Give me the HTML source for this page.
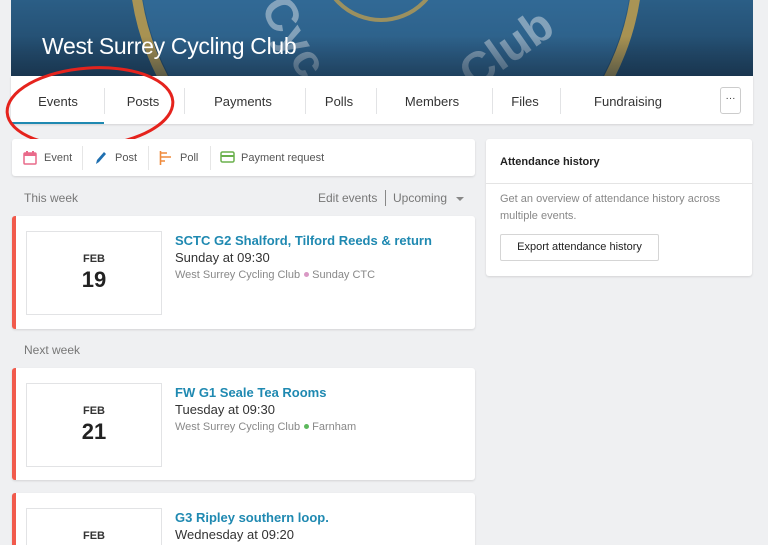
<!DOCTYPE html>
<html><head><meta charset="utf-8"><style>
*{box-sizing:border-box;margin:0;padding:0}
html,body{width:768px;height:545px;overflow:hidden}
body{background:#eff0f2;font-family:"Liberation Sans",Arial,sans-serif;position:relative}
.a{position:absolute}
.card{position:absolute;background:#fff;border-radius:3px;box-shadow:0 1px 2px rgba(0,0,0,.12)}
.tab{position:absolute;top:94px;font-size:13px;color:#333;transform:translateX(-50%)}
.sep{position:absolute;top:88px;width:1px;height:26px;background:#e2e3e5}
.ev{position:absolute;left:12px;width:463px;background:#fff;border-left:4px solid #f15a4c;border-radius:3px;box-shadow:0 1px 2px rgba(0,0,0,.12)}
.db{position:absolute;left:10px;top:15px;width:136px;height:84px;border:1px solid #e2e3e5;text-align:center}
.mon{font-size:11px;font-weight:bold;color:#333;margin-top:21px}
.day{font-size:22px;font-weight:bold;color:#222;margin-top:2px}
.tt{position:absolute;left:159px;top:17px;font-size:13px;font-weight:bold;color:#1f89b1}
.tm{position:absolute;left:159px;top:34px;font-size:13px;color:#333}
.mt{position:absolute;left:159px;top:53px;font-size:11px;color:#888}
.dot{display:inline-block;width:5px;height:5px;border-radius:50%;margin:0 3px 1px 4px;vertical-align:middle}
</style></head><body>
<div class="a" style="left:11px;top:0;width:742px;height:76px;overflow:hidden;background:linear-gradient(#2b5e86,#1f4463)">
<svg width="742" height="76" class="a" style="left:0;top:0">
<circle cx="375" cy="-40" r="252" fill="none" stroke="#c9a24a" stroke-width="10" opacity=".8"/>
<circle cx="375" cy="-40" r="246" fill="#3a78a8" opacity=".45"/>
<circle cx="370" cy="-40" r="60" fill="none" stroke="#c9a24a" stroke-width="4" opacity=".7"/>
<text x="440" y="60" font-family="Liberation Sans" font-size="46" font-weight="bold" fill="#c8d4de" opacity=".55" transform="rotate(-35 500 40)">Club</text>
<text x="230" y="20" font-family="Liberation Sans" font-size="46" font-weight="bold" fill="#c8d4de" opacity=".55" transform="rotate(60 250 30)">Cyc</text>
</svg>
<div class="a" style="left:0;bottom:0;width:100%;height:40px;background:linear-gradient(rgba(20,40,60,0),rgba(20,40,60,.5))"></div>
<div class="a" style="left:31px;top:33px;font-size:23px;color:#fff;letter-spacing:-.3px">West Surrey Cycling Club</div>
</div>
<div class="a" style="left:11px;top:76px;width:742px;height:48px;background:#fff;box-shadow:0 1px 2px rgba(0,0,0,.12)"></div>
<div class="tab" style="left:58px">Events</div><div class="tab" style="left:143px">Posts</div><div class="tab" style="left:243px">Payments</div><div class="tab" style="left:339px">Polls</div><div class="tab" style="left:432px">Members</div><div class="tab" style="left:525px">Files</div><div class="tab" style="left:628px">Fundraising</div>
<div class="sep" style="left:104px"></div><div class="sep" style="left:184px"></div><div class="sep" style="left:305px"></div><div class="sep" style="left:376px"></div><div class="sep" style="left:492px"></div><div class="sep" style="left:560px"></div>
<div class="a" style="left:11px;top:122px;width:93px;height:2px;background:#1f89b1"></div>
<div class="a" style="left:720px;top:87px;width:21px;height:27px;border:1px solid #ccc;border-radius:3px;font-size:10px;text-align:center;line-height:22px;color:#333">···</div>
<svg class="a" style="left:0;top:60px" width="190" height="110"><ellipse cx="90" cy="47" rx="83" ry="39" fill="none" stroke="#e5231d" stroke-width="3" transform="rotate(-4 90 47)"/></svg>

<div class="card" style="left:12px;top:139px;width:463px;height:37px"></div>
<svg class="a" style="left:23px;top:151px" width="14" height="14"><rect x="1" y="2" width="12" height="11" rx="1" fill="#fff" stroke="#e96a8a" stroke-width="1.5"/><rect x="1" y="2" width="12" height="3" fill="#e96a8a"/><rect x="3" y="0" width="2" height="3" fill="#e96a8a"/><rect x="9" y="0" width="2" height="3" fill="#e96a8a"/></svg>
<div class="a" style="left:44px;top:152px;font-size:11px;color:#555">Event</div>
<div class="a" style="left:82px;top:146px;width:1px;height:24px;background:#e6e6e6"></div>
<svg class="a" style="left:94px;top:151px" width="14" height="14"><path d="M2 13 L3 9 L10 1 L12 3 L5 11 Z" fill="#1f6fb0"/></svg>
<div class="a" style="left:115px;top:152px;font-size:11px;color:#555">Post</div>
<div class="a" style="left:148px;top:146px;width:1px;height:24px;background:#e6e6e6"></div>
<svg class="a" style="left:159px;top:151px" width="14" height="14"><path d="M1.5 0V14M1.5 2H8M1.5 6H12M1.5 10H6" stroke="#ef8a3c" stroke-width="1.6" fill="none"/></svg>
<div class="a" style="left:180px;top:152px;font-size:11px;color:#555">Poll</div>
<div class="a" style="left:210px;top:146px;width:1px;height:24px;background:#e6e6e6"></div>
<svg class="a" style="left:220px;top:151px" width="16" height="13"><rect x="1" y="1" width="13" height="10" rx="1.5" fill="none" stroke="#6ab04c" stroke-width="1.5"/><rect x="1" y="4" width="13" height="2" fill="#6ab04c"/></svg>
<div class="a" style="left:241px;top:152px;font-size:11px;color:#555">Payment request</div>

<div class="a" style="left:24px;top:191px;font-size:12px;color:#777">This week</div>
<div class="a" style="left:318px;top:191px;font-size:12px;color:#777">Edit events</div>
<div class="a" style="left:385px;top:190px;width:1px;height:16px;background:#888"></div>
<div class="a" style="left:393px;top:191px;font-size:12px;color:#777">Upcoming</div>
<div class="a" style="left:456px;top:197px;border:4px solid transparent;border-top:4px solid #888;border-bottom:0"></div>

<div class="ev" style="top:216px;height:113px"><div class="db"><div class="mon">FEB</div><div class="day">19</div></div>
<div class="tt">SCTC G2 Shalford, Tilford Reeds &amp; return</div><div class="tm">Sunday at 09:30</div><div class="mt">West Surrey Cycling Club<span class="dot" style="background:#d998c4"></span>Sunday CTC</div></div>

<div class="a" style="left:24px;top:343px;font-size:12px;color:#777">Next week</div>

<div class="ev" style="top:368px;height:112px"><div class="db"><div class="mon">FEB</div><div class="day">21</div></div>
<div class="tt">FW G1 Seale Tea Rooms</div><div class="tm">Tuesday at 09:30</div><div class="mt">West Surrey Cycling Club<span class="dot" style="background:#5cb85c"></span>Farnham</div></div>

<div class="ev" style="top:493px;height:80px"><div class="db"><div class="mon">FEB</div></div>
<div class="tt">G3 Ripley southern loop.</div><div class="tm">Wednesday at 09:20</div></div>

<div class="card" style="left:486px;top:139px;width:266px;height:137px">
<div class="a" style="left:14px;top:17px;font-size:11px;font-weight:bold;color:#222">Attendance history</div>
<div class="a" style="left:0;top:44px;width:100%;height:1px;background:#e4e4e4"></div>
<div class="a" style="left:14px;top:52px;width:240px;font-size:11px;line-height:17px;color:#888">Get an overview of attendance history across multiple events.</div>
<div class="a" style="left:14px;top:95px;width:159px;height:27px;border:1px solid #d5d5d5;border-radius:2px;font-size:11px;color:#222;text-align:center;line-height:25px">Export attendance history</div>
</div>
</body></html>
